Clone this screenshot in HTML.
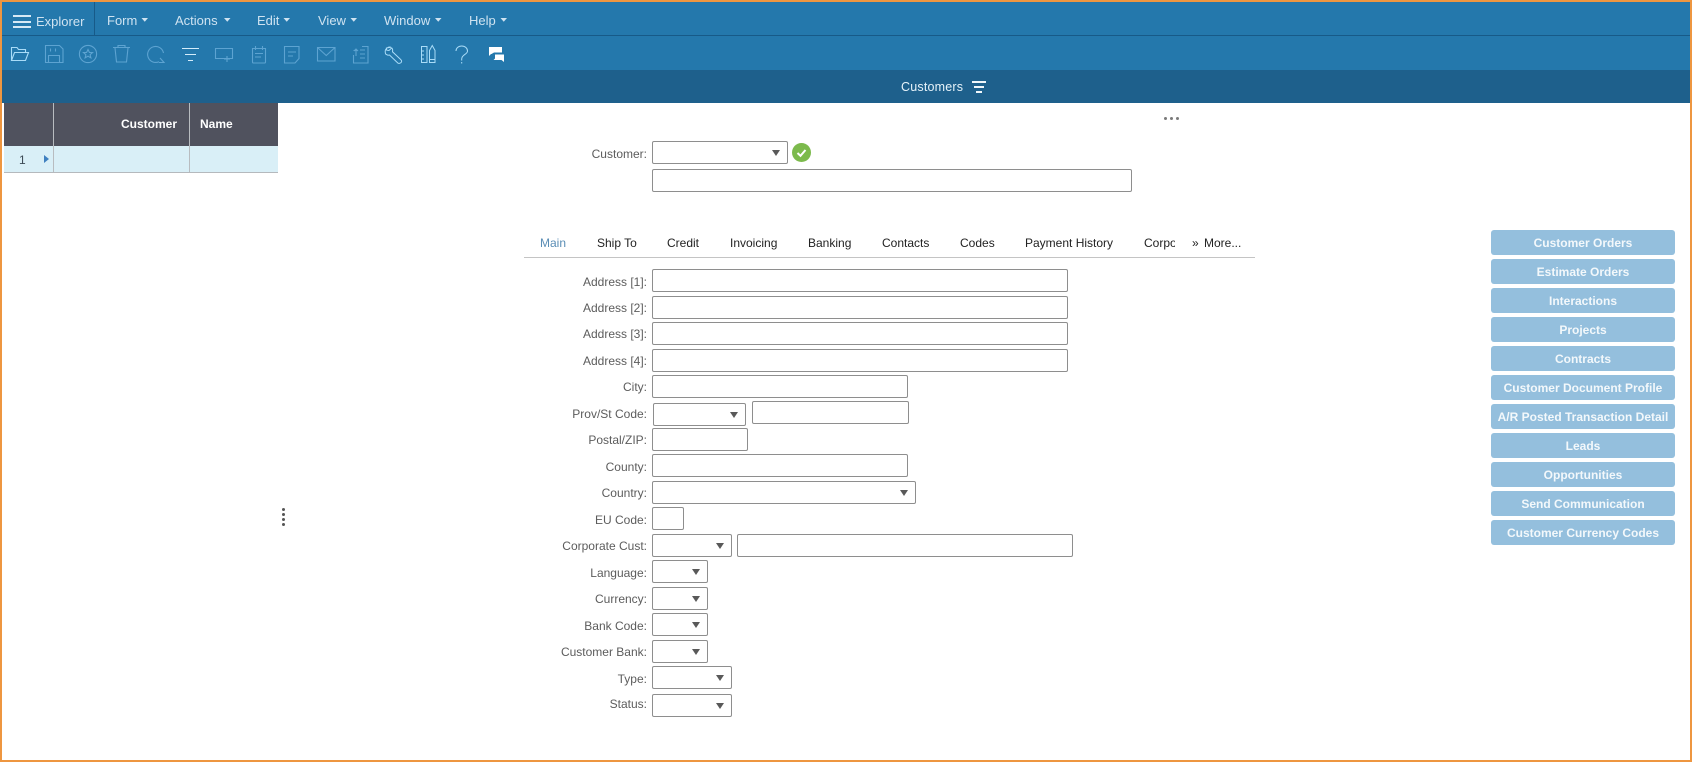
<!DOCTYPE html>
<html lang="en"><head><meta charset="utf-8"><title>Customers</title>
<style>
html,body{margin:0;padding:0;width:1692px;height:762px;overflow:hidden;background:#fff}
body{position:relative;font-family:"Liberation Sans",Arial,sans-serif;font-size:12px}
.a{position:absolute}
.t{position:absolute;white-space:nowrap;line-height:16px;height:16px}
.m{color:#cfe3f1;font-size:13px;top:13px}
.h{color:#fff;font-weight:bold;top:116px}
.tab{color:#222;top:235px}
.l{color:#5c5c5c;right:1045px;text-align:right;margin-top:1px}
.i{position:absolute;box-sizing:border-box;border:1px solid #8e8e8e;border-radius:2px;background:#fff;height:23px}
.i.s::after{content:"";position:absolute;right:7px;top:8px;border-left:4.5px solid transparent;border-right:4.5px solid transparent;border-top:6px solid #595959}
.b{position:absolute;left:1491px;width:184px;height:24px;padding-top:1px;background:#94bfdd;border-radius:3px;color:#f3f8fb;font-weight:bold;text-align:center;line-height:25px;white-space:nowrap}
.d{position:absolute;background:#7a7a7a;border-radius:50%}
</style></head><body>
<div class="a" style="left:2px;top:2px;width:1688px;height:33px;background:#2478ac"></div>
<div class="a" style="left:2px;top:35px;width:1688px;height:1px;background:#175a88"></div>
<div class="a" style="left:2px;top:36px;width:1688px;height:34px;background:#2478ac"></div>
<div class="a" style="left:2px;top:70px;width:1688px;height:33px;background:#1e608c"></div>
<div class="a" style="left:94px;top:2px;width:1px;height:33px;background:#175a88"></div>

<div class="a" style="left:13px;top:15px;width:18px;height:2px;background:#d6e9f5"></div>
<div class="a" style="left:13px;top:21px;width:18px;height:2px;background:#d6e9f5"></div>
<div class="a" style="left:13px;top:26px;width:18px;height:2px;background:#d6e9f5"></div>
<div class="t m" style="left:36px;top:14px">Explorer</div>
<div class="t m" style="left:107px">Form</div>
<div class="t m" style="left:175px">Actions</div>
<div class="t m" style="left:257px">Edit</div>
<div class="t m" style="left:318px">View</div>
<div class="t m" style="left:384px">Window</div>
<div class="t m" style="left:469px">Help</div>

<svg class="a" style="left:0;top:0" width="560" height="70" viewBox="0 0 560 70" fill="none">
<g fill="#cfe3f1">
<path d="M141.500 18h6.500l-3.250 3.800z"/><path d="M224 18h6.500l-3.250 3.800z"/><path d="M283.500 18h6.500l-3.250 3.800z"/><path d="M350.500 18h6.500l-3.250 3.800z"/><path d="M435 18h6.500l-3.250 3.800z"/><path d="M500.500 18h6.500l-3.250 3.800z"/>
</g>
<g stroke="#a9dcf8" stroke-width="1.100">
<path d="M11.500 60.500V47.500h5.500l1.500 2h7v3M11.500 60.500h14l3-8H14.500l-3 8z"/>
<path d="M182 48.500h17M185 54.500h11M188 60.500h5" stroke="#d4edfb"/>
</g>
<g stroke="#5da3d1" stroke-width="1.100">
<path d="M45.500 45.500h14l3.500 3.500v13.500H45.500zM48.500 62.500v-7h11v7M50.500 48.500v3M55.500 48.500v3"/>
<circle cx="88" cy="54" r="8.600"/><path d="M88 49.500l1.400 3h3.100l-2.400 2.200.8 3.200-2.900-1.700-2.900 1.700.8-3.200-2.400-2.200h3.100z"/>
<path d="M113 47.500h17M115 48l1.500 14h10l1.500-14M118 47v-1.500h7V47"/>
<path d="M163.500 53a8 8 0 1 0-4.500 8.700M160 58l4 4.500h-5"/>
<path d="M215.500 48.500h17v10h-17zM227 56v6M224 59h6"/>
<path d="M252.500 48.500h13v13.500a1 1 0 0 1-1 1h-11a1 1 0 0 1-1-1zM255.500 46v4M262.500 46v4M255 53.500h8M255 57h6"/>
<path d="M284.500 46.500h14.500v12l-4 4.500h-10.500zM288 52h8M288 56h5"/>
<path d="M317.500 47.500h17.500v13.500h-17.500zM317.500 47.500l8.750 8 8.750-8"/>
<path d="M353.500 50.500h4M362 46.500h6v16.500h-14.500v-8M360 50h5M360 54h5M360 58h5M356 56v-7M354 51l2-2 2 2"/>
</g>
<g stroke="#a9dcf8" stroke-width="1">
<path d="M391 47.200c-3-.8-5.900 1.700-5.800 4.500 0 1 .3 2 .8 2.700l2 .8 1.500-.2 8.300 8c1 1 3.500 0 3.800-1.300s-.5-1.800-1.200-2.500l-7.900-7.400c.3-1.500.1-3-.8-3.900l-2.700 2.600-2.300-.3-.3-2.200z"/>
<path d="M421.500 46.500h5.500v16h-5.500zM421.500 51h2.500M421.500 55h2.500M421.500 59h2.500"/>
<path d="M429.500 50.500l2.750-5 2.750 5v12h-5.500zM429.500 59.500h5.500"/>
<path d="M456 51c0-3 2.500-5 5.700-5s5.800 2 5.800 5c0 3.500-5.800 3.500-5.800 8v1.500M461.700 62v1.500"/>
</g>
<path d="M489 47h13v5.500h-8l-2.500 1.500h-.5l-2 2z" fill="#fff"/>
<path d="M495 54.500h9v7.500l-2.500-2h-8l1.500-1.500z" fill="#fff"/>
</svg>

<div class="t" style="left:901px;top:79px;color:#e6f3fa;font-size:12.500px;letter-spacing:.2px">Customers</div>
<div class="a" style="left:972px;top:81px;width:14px;height:2px;background:#f0f7fb"></div>
<div class="a" style="left:974px;top:86px;width:10px;height:2px;background:#f0f7fb"></div>
<div class="a" style="left:976px;top:91px;width:6px;height:2px;background:#f0f7fb"></div>

<div class="a" style="left:4px;top:103px;width:274px;height:43px;background:#50525e"></div>
<div class="a" style="left:4px;top:146px;width:274px;height:26px;background:#d9eff7"></div>
<div class="a" style="left:4px;top:172px;width:274px;height:1px;background:#b5b9bd"></div>
<div class="a" style="left:53px;top:103px;width:1px;height:69px;background:#b8bcc0"></div>
<div class="a" style="left:189px;top:103px;width:1px;height:69px;background:#b8bcc0"></div>
<div class="t h" style="left:121px">Customer</div>
<div class="t h" style="left:200px">Name</div>
<div class="t" style="left:19px;top:152px;color:#3c4a55">1</div>
<div class="a" style="left:44px;top:155px;border-left:5px solid #3f80c0;border-top:4.500px solid transparent;border-bottom:4.500px solid transparent"></div>

<div class="d" style="left:1164px;top:117px;width:3px;height:3px"></div>
<div class="d" style="left:1170px;top:117px;width:3px;height:3px"></div>
<div class="d" style="left:1176px;top:117px;width:3px;height:3px"></div>
<div class="d" style="left:282px;top:508px;width:3px;height:3px;background:#555"></div>
<div class="d" style="left:282px;top:513px;width:3px;height:3px;background:#555"></div>
<div class="d" style="left:282px;top:518px;width:3px;height:3px;background:#555"></div>
<div class="d" style="left:282px;top:523px;width:3px;height:3px;background:#555"></div>

<div class="t l" style="top:145px">Customer:</div>
<div class="i s" style="left:652px;top:141px;width:136px"></div>
<svg class="a" style="left:792px;top:143px" width="19" height="19" viewBox="0 0 19 19"><circle cx="9.500" cy="9.500" r="9.500" fill="#7cba4c"/><path d="M5.500 10l3 2.800 5-5.800" fill="none" stroke="#fff" stroke-width="2"/></svg>
<div class="i" style="left:652px;top:169px;width:480px"></div>

<div class="t tab" style="left:540px;color:#5a8db5">Main</div>
<div class="t tab" style="left:597px">Ship To</div>
<div class="t tab" style="left:667px">Credit</div>
<div class="t tab" style="left:730px">Invoicing</div>
<div class="t tab" style="left:808px">Banking</div>
<div class="t tab" style="left:882px">Contacts</div>
<div class="t tab" style="left:960px">Codes</div>
<div class="t tab" style="left:1025px">Payment History</div>
<div class="t tab" style="left:1144px;width:31px;overflow:hidden">Corporate</div>
<div class="t tab" style="left:1192px">&#187;</div>
<div class="t tab" style="left:1204px">More...</div>
<div class="a" style="left:524px;top:257px;width:731px;height:1px;background:#c4c4c4"></div>

<div class="t l" style="top:273px">Address [1]:</div><div class="i" style="left:652px;top:269px;width:416px"></div>
<div class="t l" style="top:299px">Address [2]:</div><div class="i" style="left:652px;top:296px;width:416px"></div>
<div class="t l" style="top:325px">Address [3]:</div><div class="i" style="left:652px;top:322px;width:416px"></div>
<div class="t l" style="top:352px">Address [4]:</div><div class="i" style="left:652px;top:349px;width:416px"></div>
<div class="t l" style="top:378px">City:</div><div class="i" style="left:652px;top:375px;width:256px"></div>
<div class="t l" style="top:405px">Prov/St Code:</div><div class="i s" style="left:653px;top:403px;width:93px"></div><div class="i" style="left:752px;top:401px;width:157px"></div>
<div class="t l" style="top:431px">Postal/ZIP:</div><div class="i" style="left:652px;top:428px;width:96px"></div>
<div class="t l" style="top:458px">County:</div><div class="i" style="left:652px;top:454px;width:256px"></div>
<div class="t l" style="top:484px">Country:</div><div class="i s" style="left:652px;top:481px;width:264px"></div>
<div class="t l" style="top:511px">EU Code:</div><div class="i" style="left:652px;top:507px;width:32px"></div>
<div class="t l" style="top:537px">Corporate Cust:</div><div class="i s" style="left:652px;top:534px;width:80px"></div><div class="i" style="left:737px;top:534px;width:336px"></div>
<div class="t l" style="top:564px">Language:</div><div class="i s" style="left:652px;top:560px;width:56px"></div>
<div class="t l" style="top:590px">Currency:</div><div class="i s" style="left:652px;top:587px;width:56px"></div>
<div class="t l" style="top:617px">Bank Code:</div><div class="i s" style="left:652px;top:613px;width:56px"></div>
<div class="t l" style="top:643px">Customer Bank:</div><div class="i s" style="left:652px;top:640px;width:56px"></div>
<div class="t l" style="top:670px">Type:</div><div class="i s" style="left:652px;top:666px;width:80px"></div>
<div class="t l" style="top:695px">Status:</div><div class="i s" style="left:652px;top:694px;width:80px"></div>

<div class="b" style="top:230px">Customer Orders</div>
<div class="b" style="top:259px">Estimate Orders</div>
<div class="b" style="top:288px">Interactions</div>
<div class="b" style="top:317px">Projects</div>
<div class="b" style="top:346px">Contracts</div>
<div class="b" style="top:375px">Customer Document Profile</div>
<div class="b" style="top:404px">A/R Posted Transaction Detail</div>
<div class="b" style="top:433px">Leads</div>
<div class="b" style="top:462px">Opportunities</div>
<div class="b" style="top:491px">Send Communication</div>
<div class="b" style="top:520px">Customer Currency Codes</div>

<div class="a" style="left:0;top:0;width:1692px;height:2px;background:#ee9640"></div>
<div class="a" style="left:0;top:760px;width:1692px;height:2px;background:#ee9640"></div>
<div class="a" style="left:0;top:0;width:2px;height:762px;background:#ee9640"></div>
<div class="a" style="left:1690px;top:0;width:2px;height:762px;background:#ee9640"></div>
</body></html>
